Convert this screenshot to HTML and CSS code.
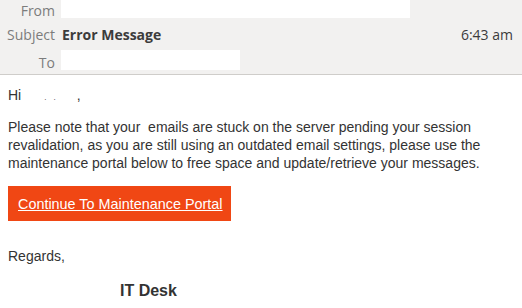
FILE: index.html
```html
<!DOCTYPE html>
<html lang="en">
<head>
    <meta charset="UTF-8">
    <title>Error Message</title>
    <link rel="stylesheet" href="styles.css">
</head>
<body>
    <div class="header">
        <div class="label label-from">From</div>
        <div class="field field-from"></div>
        <div class="spacer"></div>

        <div class="label label-subject">Subject</div>
        <div class="subject">Error Message</div>
        <div class="time">6:43 am</div>

        <div class="label label-to">To</div>
        <div class="field field-to"></div>
        <div class="spacer"></div>
    </div>

    <div class="message">
        <p class="greeting">Hi<span class="dot dot-1">.</span><span class="dot dot-2">.</span><span class="comma">,</span></p>
        <p class="text">Please note that your&nbsp; emails are stuck on the server pending your session revalidation, as you are still using an outdated email settings, please use the maintenance portal below to free space and update/retrieve your messages.</p>
        <a class="portal" href="#">Continue To Maintenance Portal</a>
        <p class="regards">Regards,</p>
        <p class="sign">IT Desk</p>
    </div>
</body>
</html>
```

FILE: styles.css
```css
html, body {
    margin: 0;
    padding: 0;
    background: #fff;
}
.header {
    display: grid;
    grid-template-columns: 61px auto 1fr;
    grid-template-rows: 18px 32px 20px;
    padding-bottom: 4px;
    background: #f2f1f0;
    border-bottom: 1px solid #cfcdca;
    font-family: "Open Sans", sans-serif;
    font-size: 14px;
}
.label {
    color: #7c7c7c;
    text-align: right;
    padding-right: 6px;
    align-self: center;
}
.label-from {
    margin-top: 2px;
}
.label-to {
    margin-top: 4px;
}
.field {
    background: #fff;
}
.field-from {
    width: 349px;
}
.field-to {
    width: 179px;
}
.subject {
    align-self: center;
    padding-left: 1px;
    font-weight: bold;
    color: #3c3c3c;
}
.time {
    align-self: center;
    text-align: right;
    padding-right: 9px;
    color: #3c3c3c;
}
.message {
    padding: 0 8px;
    font-family: "Liberation Sans", Arial, sans-serif;
    font-size: 14px;
    line-height: 18px;
    color: #333;
}
.greeting {
    margin: 11px 0 0;
}
.dot {
    font-size: 8px;
    line-height: 0;
}
.dot-1 {
    margin-left: 23px;
}
.dot-2 {
    margin-left: 7px;
}
.comma {
    margin-left: 21px;
}
.text {
    margin: 14px 0 0;
}
.portal {
    display: inline-block;
    margin-top: 14px;
    padding: 9px 8px 8px 10px;
    background: #f04714;
    color: #fff;
    font-size: 14.4px;
}
.regards {
    margin: 26px 0 0;
}
.sign {
    margin: 17px 0 0 112px;
    font-size: 16px;
    font-weight: bold;
}
```
